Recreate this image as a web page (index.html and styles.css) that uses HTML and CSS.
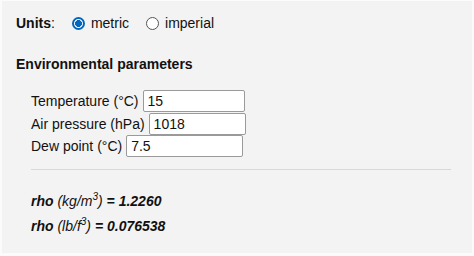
FILE: index.html
```html
<!DOCTYPE html>
<html>
<head>
<meta charset="utf-8">
<link rel="stylesheet" href="styles.css">
</head>
<body>
<div class="panel">
  <div class="units">
    <span class="units-label"><b>Units</b>:</span>
    <label class="opt"><span class="radio on"></span>metric</label>
    <label class="opt"><span class="radio"></span>imperial</label>
  </div>
  <h3 class="section">Environmental parameters</h3>
  <div class="fields">
    <div class="row"><label>Temperature (°C)</label><input class="inp w1" type="text" value="15"></div>
    <div class="row"><label>Air pressure (hPa)</label><input class="inp w2" type="text" value="1018"></div>
    <div class="row"><label>Dew point (°C)</label><input class="inp w3" type="text" value="7.5"></div>
  </div>
  <hr class="sep">
  <div class="results">
    <div class="res"><b>rho</b> (kg/m<sup>3</sup>) <b>= 1.2260</b></div>
    <div class="res"><b>rho</b> (lb/f<sup>3</sup>) <b>= 0.076538</b></div>
  </div>
</div>
</body>
</html>
```
FILE: styles.css
```css
html, body { margin: 0; padding: 0; background: #fbfbfb; }
body { font-family: "Liberation Sans", Arial, sans-serif; font-size: 14px; color: #111; }
.panel {
  margin: 1px 2px 0 2px;
  height: 252px;
  background: #f3f3f3;
  padding: 0 0 0 14px;
  box-sizing: border-box;
  overflow: hidden;
}
.units { display: flex; align-items: center; padding-top: 13px; height: 18px; }
.units-label { margin-right: 17px; }
.opt { display: flex; align-items: center; margin-right: 17px; }
.radio {
  width: 13px; height: 13px; box-sizing: border-box;
  border: 1px solid #555; border-radius: 50%;
  background: #fff; margin-right: 6px;
}
.radio.on {
  border: 2px solid #0067c0;
  background: radial-gradient(circle, #0067c0 0 3.2px, #fff 3.7px);
}
.section { font-size: 14px; font-weight: bold; margin: 23px 0 0 0; line-height: 18px; }
.fields { padding: 17px 0 0 15px; }
.row { display: flex; align-items: center; height: 22.5px; }
.row label { margin-right: 4px; }
.inp {
  font: 14px "Liberation Sans", Arial, sans-serif;
  height: 22px; box-sizing: border-box;
  border: 1px solid #9a9a9a; border-radius: 2px;
  padding: 0 4px; background: #fff; color: #111;
}
.w1 { width: 102px; }
.w2 { width: 97px; }
.w3 { width: 117px; }
.sep { border: 0; border-top: 1px solid #d8d8d8; margin: 11px 21px 0 15px; }
.results { padding: 19px 0 0 15px; }
.res { font-style: italic; line-height: 25px; height: 25px; }
.res sup { font-size: 10px; line-height: 0; }
```
